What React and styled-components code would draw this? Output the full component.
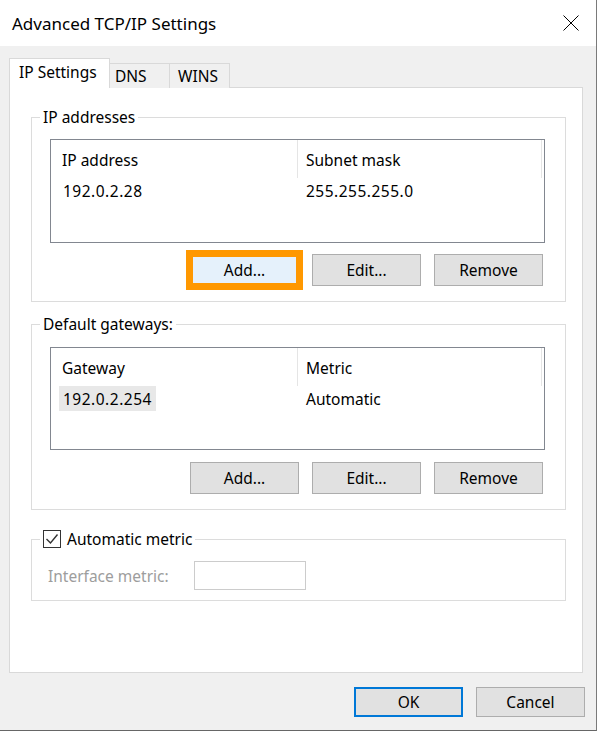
import React from "react";
import styled, { createGlobalStyle, css } from "styled-components";

const GlobalStyle = createGlobalStyle`
  body {
    margin: 0;
    background: #fff;
    font-family: "Noto Sans", "Open Sans", sans-serif;
    color: #000;
  }
`;

const Window = styled.div`
  box-sizing: border-box;
  width: 597px;
  height: 731px;
  background: #f0f0f0;
  border-right: 1px solid #7a7a7a;
  border-bottom: 1px solid #666;
  display: flex;
  flex-direction: column;
`;

const TitleBar = styled.div`
  height: 46px;
  flex: none;
  background: #fff;
  display: flex;
  align-items: center;
  justify-content: space-between;
  padding-left: 12px;
  font-size: 17px;
`;

const CloseButton = styled.div`
  width: 46px;
  height: 46px;
  margin-right: 2px;
  display: flex;
  align-items: center;
  justify-content: center;
`;

const Body = styled.div`
  flex: 1;
  display: flex;
  flex-direction: column;
  padding: 12px 0 0 9px;
  font-size: 15.5px;
`;

const TabStrip = styled.div`
  display: flex;
  align-items: flex-end;
  height: 30px;
  margin-bottom: -1px;
  position: relative;
  z-index: 1;
`;

const Tab = styled.div`
  box-sizing: border-box;
  display: flex;
  align-items: center;
  width: ${(p) => p.$width}px;
  padding-left: ${(p) => p.$pad}px;
  border: 1px solid #d9d9d9;
  border-bottom: none;
  height: 25px;
  margin-left: -1px;
  background: #f0f0f0;
  ${(p) =>
    p.$active &&
    css`
      height: 30px;
      margin-left: 0;
      background: #fff;
      padding-bottom: 3px;
    `}
`;

const Panel = styled.div`
  box-sizing: border-box;
  width: 574px;
  height: 586px;
  background: #fff;
  border: 1px solid #d9d9d9;
  padding: 19px 16px 0 21px;
  display: flex;
  flex-direction: column;
`;

const Group = styled.fieldset`
  margin: ${(p) => p.$gap || 0}px 0 0 0;
  padding: 0 20px ${(p) => p.$bottom || 15}px 18px;
  border: 1px solid #dcdcdc;
  min-width: 0;
`;

const Legend = styled.legend`
  padding: 0 3px;
  margin-left: -10px;
  line-height: 20px;
  height: 20px;
  display: flex;
  align-items: center;
  gap: 6px;
`;

const ListBox = styled.div`
  box-sizing: border-box;
  height: ${(p) => p.$height}px;
  margin-top: ${(p) => p.$gap}px;
  background: #fff;
  border: 1px solid #828790;
`;

const ListGrid = styled.div`
  display: grid;
  grid-template-columns: 247px 244px 1fr;
`;

const HeaderCell = styled.div`
  height: 38px;
  box-sizing: border-box;
  padding: 10px 0 0 ${(p) => p.$pad}px;
  line-height: 20px;
  border-right: ${(p) => (p.$last ? "none" : "1px solid #e5e5e5")};
`;

const Cell = styled.div`
  height: 25px;
  padding-left: 8px;
  line-height: 25px;
`;

const CellText = styled.span`
  display: inline-block;
  padding: 1px ${(p) => (p.$first ? 4 : 0)}px 0;
  height: 24px;
  line-height: 24px;
  letter-spacing: ${(p) => (p.$numeric ? 0.5 : 0)}px;
  background: ${(p) => (p.$selected ? "#e8e8e8" : "transparent")};
`;

const ButtonRow = styled.div`
  display: flex;
  justify-content: flex-end;
  gap: 13px;
  margin-top: ${(p) => p.$gap}px;
  padding-right: 2px;
`;

const Button = styled.div`
  box-sizing: border-box;
  width: 109px;
  height: ${(p) => p.$height || 32}px;
  background: #e1e1e1;
  border: 1px solid #adadad;
  display: flex;
  align-items: center;
  justify-content: center;
  ${(p) =>
    p.$focused &&
    css`
      background: #e5f1fb;
      border: 3px solid #ff9800;
      box-shadow: 0 0 0 4px #ff9800;
    `}
  ${(p) =>
    p.$default &&
    css`
      border: 2px solid #0078d7;
    `}
`;

const CheckBox = styled.span`
  box-sizing: border-box;
  width: 18px;
  height: 18px;
  border: 1px solid #333;
  background: #fff;
  display: flex;
  align-items: center;
  justify-content: center;
`;

const MetricRow = styled.div`
  display: flex;
  align-items: center;
  margin: 12px 0 0 -2px;
  color: #9d9d9d;
`;

const MetricLabel = styled.span`
  width: 146px;
`;

const MetricInput = styled.div`
  box-sizing: border-box;
  width: 112px;
  height: 29px;
  border: 1px solid #cccccc;
  background: #fff;
`;

const Footer = styled.div`
  display: flex;
  justify-content: flex-end;
  gap: 13px;
  margin-top: 14px;
  padding-right: 11px;
`;

function CloseIcon() {
  return (
    <svg width="16" height="16" viewBox="0 0 16 16">
      <path d="M0.5 0.5 L15.5 15.5 M15.5 0.5 L0.5 15.5" stroke="#000" strokeWidth="1" fill="none" />
    </svg>
  );
}

function CheckMark() {
  return (
    <svg width="14" height="14" viewBox="0 0 14 14">
      <path d="M1.5 7 L5.5 11 L12.5 2.5" stroke="#333" strokeWidth="1.4" fill="none" />
    </svg>
  );
}

const isNumeric = (text) => /^[\d.]+$/.test(text);

function AddressList({ height, gap, headers, rows, highlight }) {
  return (
    <ListBox $height={height} $gap={gap}>
      <ListGrid>
        <HeaderCell $pad={11}>{headers[0]}</HeaderCell>
        <HeaderCell $pad={8}>{headers[1]}</HeaderCell>
        <HeaderCell $last />
        {rows.map((row, i) => (
          <React.Fragment key={i}>
            <Cell>
              <CellText $first $numeric={isNumeric(row[0])} $selected={highlight}>
                {row[0]}
              </CellText>
            </Cell>
            <Cell>
              <CellText $numeric={isNumeric(row[1])}>{row[1]}</CellText>
            </Cell>
            <Cell />
          </React.Fragment>
        ))}
      </ListGrid>
    </ListBox>
  );
}

export default function App() {
  return (
    <>
      <GlobalStyle />
      <Window>
        <TitleBar>
          <span>Advanced TCP/IP Settings</span>
          <CloseButton>
            <CloseIcon />
          </CloseButton>
        </TitleBar>
        <Body>
          <TabStrip>
            <Tab $active $width={101} $pad={9}>
              IP Settings
            </Tab>
            <Tab $width={61} $pad={5}>
              DNS
            </Tab>
            <Tab $width={61} $pad={8}>
              WINS
            </Tab>
          </TabStrip>
          <Panel>
            <Group>
              <Legend>IP addresses</Legend>
              <AddressList
                height={104}
                gap={12}
                headers={["IP address", "Subnet mask"]}
                rows={[["192.0.2.28", "255.255.255.0"]]}
              />
              <ButtonRow $gap={11}>
                <Button $focused>Add...</Button>
                <Button>Edit...</Button>
                <Button>Remove</Button>
              </ButtonRow>
            </Group>

            <Group $gap={12}>
              <Legend>Default gateways:</Legend>
              <AddressList
                height={103}
                gap={13}
                headers={["Gateway", "Metric"]}
                rows={[["192.0.2.254", "Automatic"]]}
                highlight
              />
              <ButtonRow $gap={12}>
                <Button>Add...</Button>
                <Button>Edit...</Button>
                <Button>Remove</Button>
              </ButtonRow>
            </Group>

            <Group $gap={19} $bottom={10}>
              <Legend>
                <CheckBox>
                  <CheckMark />
                </CheckBox>
                Automatic metric
              </Legend>
              <MetricRow>
                <MetricLabel>Interface metric:</MetricLabel>
                <MetricInput />
              </MetricRow>
            </Group>
          </Panel>
          <Footer>
            <Button $height={30} $default>
              OK
            </Button>
            <Button $height={30}>Cancel</Button>
          </Footer>
        </Body>
      </Window>
    </>
  );
}
